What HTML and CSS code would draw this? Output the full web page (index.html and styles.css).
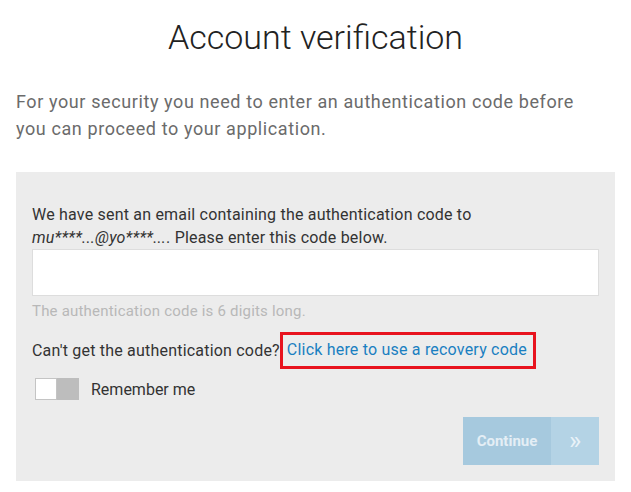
FILE: index.html
```html
<!DOCTYPE html>
<html lang="en">
<head>
<meta charset="UTF-8">
<meta name="viewport" content="width=device-width, initial-scale=1.0">
<title>Account verification</title>
<link rel="stylesheet" href="styles.css">
</head>
<body>

<div class="page">
    <h1 class="title">Account verification</h1>
    <p class="intro">For your security you need to enter an authentication code before you can proceed to your application.</p>

    <div class="panel">
        <label class="field-label" for="code">We have sent an email containing the authentication code to <em>mu****...@yo****...</em>. Please enter this code below.</label>
        <input type="text" id="code" class="code-input">
        <div class="hint">The authentication code is 6 digits long.</div>

        <div class="recovery">
            <span>Can't get the authentication code?</span><a href="#" class="recovery-link">Click here to use a recovery code</a>
        </div>

        <div class="remember">
            <span class="toggle"><span class="knob"></span></span>
            <span class="remember-text">Remember me</span>
        </div>

        <div class="actions">
            <button class="continue" disabled>
                <span class="continue-text">Continue</span>
                <span class="continue-icon">&raquo;</span>
            </button>
        </div>
    </div>
</div>

</body>
</html>
```

FILE: styles.css
```css
body {
    margin: 0;
    font-family: Roboto, Arial, sans-serif;
    color: #333;
    background-color: #fff;
}
.page {
    padding: 0 16px;
}
.title {
    margin: 14px 0 0;
    font-size: 34px;
    font-weight: 300;
    line-height: 46px;
    text-align: center;
    color: #222;
}
.intro {
    max-width: 590px;
    margin: 28px 0 30px;
    font-size: 18px;
    line-height: 27px;
    letter-spacing: 0.6px;
    color: #6b6b6b;
}
.panel {
    background-color: #ececec;
    padding: 31px 16px 16px;
}
.field-label {
    display: block;
    max-width: 450px;
    font-size: 16px;
    line-height: 23px;
    letter-spacing: 0.2px;
    color: #333;
}
.code-input {
    display: block;
    width: 100%;
    height: 47px;
    margin: 0;
    border: 1px solid #ddd;
    background-color: #fff;
    box-sizing: border-box;
}
.hint {
    margin-top: 6px;
    font-size: 15px;
    line-height: 18px;
    letter-spacing: 0.2px;
    color: #b8b8b8;
}
.recovery {
    display: flex;
    align-items: center;
    margin-top: 12px;
    font-size: 16px;
    line-height: 23px;
    letter-spacing: 0.2px;
    color: #333;
}
.recovery-link {
    color: #1a7fc1;
    text-decoration: none;
    border: 3px solid #e8131e;
    padding: 3px 6px 5px 4px;
}
.remember {
    display: flex;
    align-items: center;
    margin-top: 9px;
    padding-left: 3px;
}
.toggle {
    display: inline-block;
    width: 44px;
    height: 22px;
    background-color: #bdbdbd;
}
.knob {
    display: block;
    width: 20px;
    height: 20px;
    border: 1px solid #c4c4c4;
    background-color: #fff;
}
.remember-text {
    margin-left: 12px;
    font-size: 16px;
    color: #333;
}
.actions {
    display: flex;
    justify-content: flex-end;
    margin-top: 17px;
}
.continue {
    display: flex;
    padding: 0;
    border: none;
    font-family: inherit;
    cursor: default;
}
.continue-text {
    width: 88px;
    height: 48px;
    line-height: 48px;
    background-color: #a6c9de;
    color: #e4eef5;
    font-weight: 700;
    font-size: 15px;
}
.continue-icon {
    width: 48px;
    height: 48px;
    line-height: 46px;
    background-color: #b4d3e5;
    color: #e9f2f8;
    font-size: 26px;
}
```
